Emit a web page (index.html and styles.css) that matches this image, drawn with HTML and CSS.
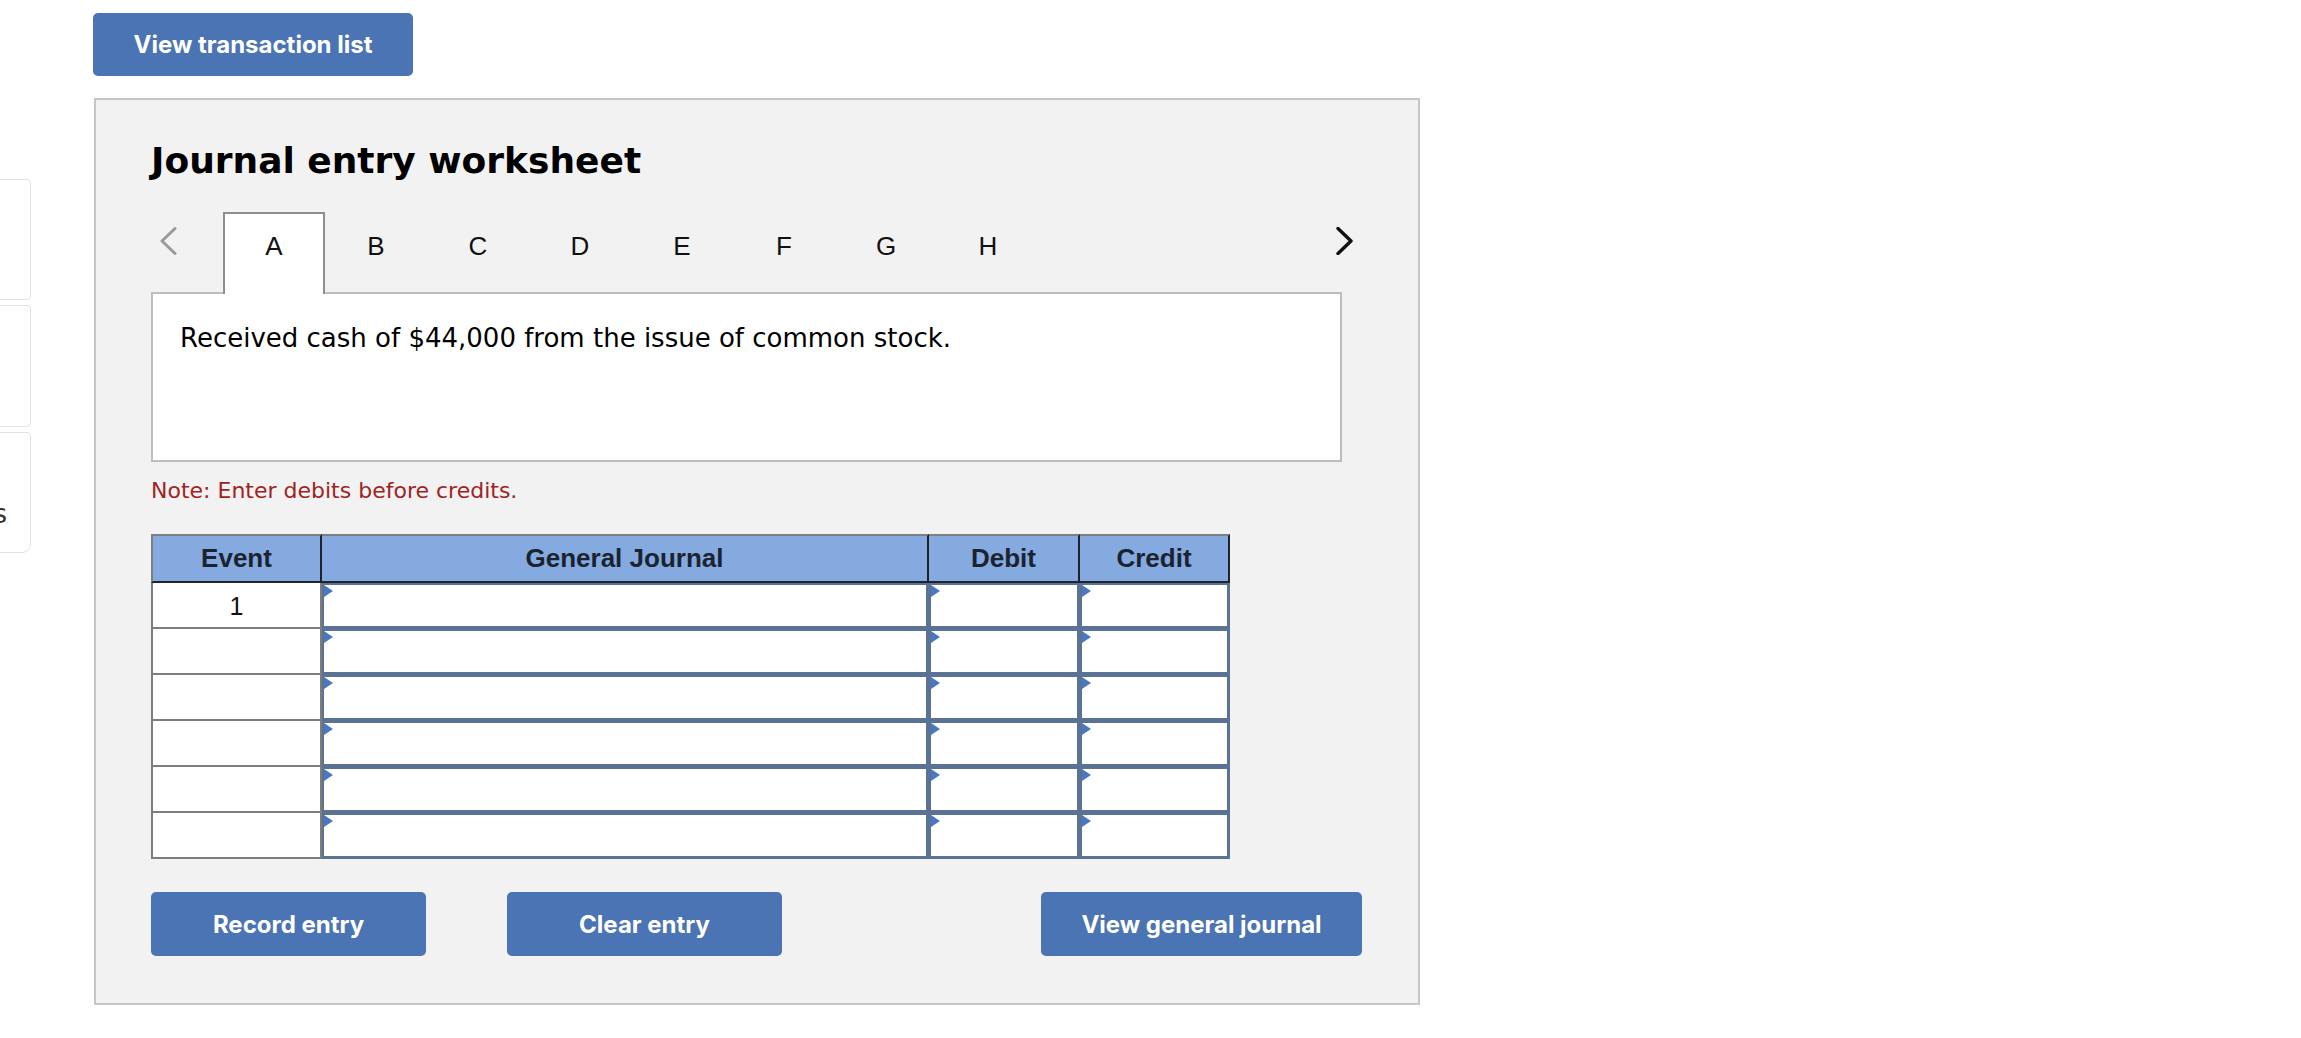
FILE: index.html
```html
<!DOCTYPE html>
<html lang="en">
<head>
<meta charset="utf-8">
<title>Journal entry worksheet</title>
<link rel="stylesheet" href="styles.css">
</head>
<body>
<div class="page">
  <aside class="side">
    <div class="card"></div>
    <div class="card card-mid"></div>
    <div class="card card-last"><span>s</span></div>
  </aside>
  <main class="main">
    <button class="btn btn-top" type="button">View transaction list</button>
    <section class="panel">
      <h1 class="title">Journal entry worksheet</h1>
      <div class="tabs">
        <span class="nav prev"><svg width="18" height="28" viewBox="0 0 18 28"><polyline points="16,1.5 3,14 16,26.5" fill="none" stroke="#9a9a9a" stroke-width="3" stroke-linecap="round" stroke-linejoin="round"/></svg></span>
        <span class="tab active">A</span>
        <span class="tab">B</span>
        <span class="tab">C</span>
        <span class="tab">D</span>
        <span class="tab">E</span>
        <span class="tab">F</span>
        <span class="tab">G</span>
        <span class="tab">H</span>
        <span class="nav next"><svg width="18" height="28" viewBox="0 0 18 28"><polyline points="2,1.5 15,14 2,26.5" fill="none" stroke="#111" stroke-width="3.4" stroke-linecap="round" stroke-linejoin="round"/></svg></span>
      </div>
      <div class="desc">Received cash of $44,000 from the issue of common stock.</div>
      <p class="note">Note: Enter debits before credits.</p>
      <div class="jtable">
        <div class="th th-first">Event</div>
        <div class="th">General Journal</div>
        <div class="th">Debit</div>
        <div class="th">Credit</div>

        <div class="ev">1</div><div class="in"></div><div class="in"></div><div class="in"></div>
        <div class="ev"></div><div class="in"></div><div class="in"></div><div class="in"></div>
        <div class="ev"></div><div class="in"></div><div class="in"></div><div class="in"></div>
        <div class="ev"></div><div class="in"></div><div class="in"></div><div class="in"></div>
        <div class="ev"></div><div class="in"></div><div class="in"></div><div class="in"></div>
        <div class="ev"></div><div class="in"></div><div class="in"></div><div class="in"></div>
      </div>
      <div class="actions">
        <button class="btn btn-action" type="button">Record entry</button>
        <button class="btn btn-action btn-clear" type="button">Clear entry</button>
        <button class="btn btn-action btn-gj" type="button">View general journal</button>
      </div>
    </section>
  </main>
</div>
</body>
</html>
```
FILE: styles.css
```css
* { box-sizing: border-box; }

body {
  margin: 0;
  background: #ffffff;
  font-family: "DejaVu Sans", Verdana, sans-serif;
  color: #000;
}

.page {
  display: flex;
  align-items: flex-start;
}

/* left sidebar cards, mostly off-screen */
.side {
  flex: none;
  width: 31px;
  margin-top: 179px;
  display: flex;
  flex-direction: column;
  gap: 5px;
}

.card {
  width: 200px;
  height: 121px;
  margin-left: -169px;
  background: #fff;
  border: 1px solid #e2e2e2;
  border-radius: 0 4px 4px 0;
}

.card-mid { height: 122px; }

.card-last {
  text-align: right;
  padding: 66px 23px 0 0;
  font-size: 26px;
  line-height: 30px;
  color: #333;
  border-radius: 0 4px 9px 0;
}

.main {
  margin-left: 62px;
  margin-top: 13px;
}

.btn {
  display: block;
  border: 0;
  border-radius: 5px;
  background: #4a74b3;
  color: #fff;
  font-family: Inter, "Liberation Sans", sans-serif;
  font-weight: 700;
  font-size: 24px;
  padding: 0;
  cursor: pointer;
}

.btn-top {
  width: 320px;
  height: 63px;
}

.panel {
  margin-top: 22px;
  margin-left: 1px;
  width: 1326px;
  background: #f2f2f2;
  border: 2px solid #c6c6c6;
  padding: 39px 56px 47px 55px;
}

.title {
  margin: 0 0 29px;
  font-family: "DejaVu Sans", Verdana, sans-serif;
  font-weight: 700;
  font-size: 36px;
  line-height: 44px;
  color: #000;
}

.tabs {
  position: relative;
  z-index: 1;
  display: flex;
  width: 1203px;
  height: 82px;
  margin-bottom: -2px;
}

.nav { display: block; }
.nav svg { display: block; }

.prev {
  width: 72px;
  padding: 15px 0 0 8px;
}

.next {
  margin-left: auto;
  padding-top: 15px;
}

.tab {
  width: 102px;
  text-align: center;
  font-family: "Liberation Sans", Arial, sans-serif;
  font-size: 26px;
  line-height: 30px;
  padding-top: 19px;
  color: #111;
}

.tab.active {
  background: #fff;
  border: 2px solid #8e8e8e;
  border-bottom: 0;
  padding-top: 17px;
}

.desc {
  width: 1191px;
  height: 170px;
  background: #fff;
  border: 2px solid #bdbdbd;
  padding: 29px 27px;
  font-size: 26px;
  line-height: 30px;
  color: #000;
}

.note {
  margin: 16px 0 30px;
  font-size: 22px;
  line-height: 26px;
  color: #a02323;
}

.jtable {
  display: grid;
  grid-template-columns: 171px 607px 151px 150px;
  width: 1079px;
  font-family: "Liberation Sans", Arial, sans-serif;
}

.th {
  height: 49px;
  display: flex;
  align-items: center;
  justify-content: center;
  background: #84aadf;
  border-top: 2px solid #7f7f7f;
  border-right: 2px solid #1e2229;
  border-bottom: 2px solid #1e2430;
  font-weight: 700;
  font-size: 26px;
  color: #1b2331;
}

.th-first { border-left: 2px solid #7f7f7f; }

.ev {
  height: 46px;
  display: flex;
  align-items: center;
  justify-content: center;
  padding-top: 3px;
  background: #fff;
  border-left: 2px solid #7d7d7d;
  border-right: 2px solid #7d7d7d;
  border-bottom: 2px solid #7d7d7d;
  font-size: 25px;
  color: #111;
}

.in {
  position: relative;
  height: 46px;
  background: #fff;
  border-style: solid;
  border-color: #5a7394;
  border-width: 2px 3px 3px 2px;
}

.in::before {
  content: "";
  position: absolute;
  left: 0;
  top: 0;
  border-style: solid;
  border-width: 6px 0 6px 9px;
  border-color: transparent transparent transparent #4a78c0;
}

.actions {
  display: flex;
  margin-top: 33px;
}

.btn-action {
  width: 275px;
  height: 64px;
}

.btn-clear { margin-left: 81px; }

.btn-gj {
  width: 321px;
  margin-left: auto;
}
```
